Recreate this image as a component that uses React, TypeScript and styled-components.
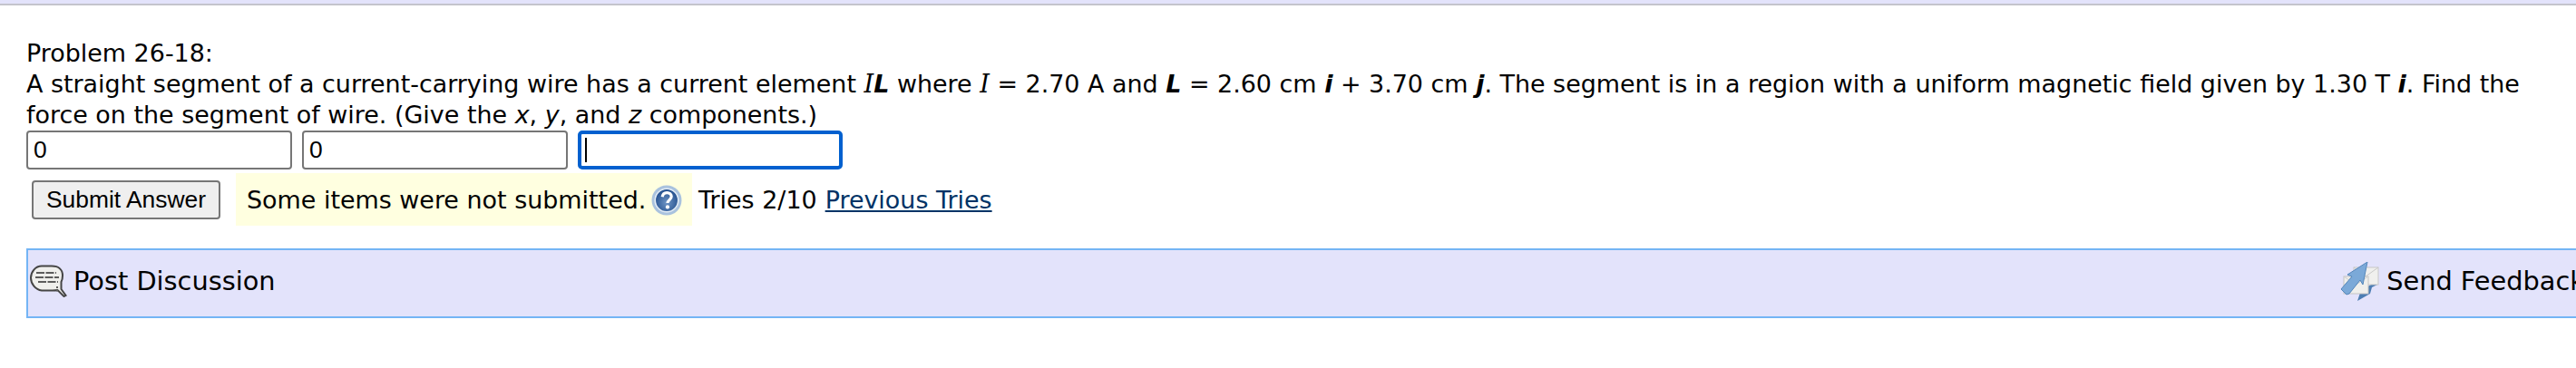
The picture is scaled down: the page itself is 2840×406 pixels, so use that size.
import React from "react";
import styled, { createGlobalStyle } from "styled-components";

const GlobalStyle = createGlobalStyle`
  html, body {
    margin: 0;
    padding: 0;
    background: #fff;
    overflow: hidden;
  }
  body {
    font-family: "DejaVu Sans", Verdana, sans-serif;
    font-size: 26.93px;
    color: #000;
  }
`;

const Page = styled.div`
  width: 2840px;
  height: 406px;
  overflow: hidden;
`;

const TopBar = styled.div`
  height: 4px;
  background: #e3e3fb;
  border-bottom: 2px solid #c4c4cc;
`;

const Problem = styled.div`
  padding: 36px 0 0 29px;
  line-height: 34px;
  width: 2770px;
`;

const Heading = styled.div``;

const Statement = styled.div``;

const MathVar = styled.i`
  font-family: "DejaVu Serif", serif;
  font-size: 27px;
`;

const Vec = styled.b`
  font-style: italic;
`;

const Inputs = styled.div`
  display: flex;
  gap: 11px;
`;

const AnswerInput = styled.input`
  box-sizing: border-box;
  width: 293px;
  height: 43px;
  margin: 0;
  padding: 0 6px;
  border: 2px solid #767676;
  border-radius: 4px;
  background: #fff;
  color: #000;
  font: 26.4px "Liberation Sans", Arial, sans-serif;
  outline: none;
`;

const FocusedBox = styled.div`
  box-sizing: border-box;
  width: 292px;
  height: 43px;
  padding: 4px 4px;
  border: 4px solid #0060cf;
  border-radius: 5px;
  background: #fff;
`;

const Caret = styled.div`
  width: 2px;
  height: 27px;
  background: #000;
`;

const SubmitRow = styled.div`
  display: flex;
  align-items: center;
  margin-top: 4px;
`;

const SubmitButton = styled.button`
  box-sizing: border-box;
  width: 208px;
  height: 43px;
  margin: 0 17px 0 6px;
  padding: 0;
  border: 2px solid #767676;
  border-radius: 4px;
  background: #efefef;
  color: #000;
  font: 26.4px "Liberation Sans", Arial, sans-serif;
  white-space: nowrap;
`;

const Notice = styled.div`
  box-sizing: border-box;
  display: flex;
  align-items: center;
  gap: 6px;
  width: 503px;
  height: 58px;
  padding: 2px 0 0 12px;
  background: #ffffe0;
`;

const Tries = styled.span`
  margin-left: 7px;
  padding-top: 2px;
  white-space: nowrap;
`;

const PrevLink = styled.a`
  margin-left: 9px;
  padding-top: 2px;
  color: #003366;
  text-decoration: underline;
  white-space: nowrap;
`;

const DiscussionBar = styled.div`
  box-sizing: border-box;
  display: flex;
  align-items: center;
  justify-content: space-between;
  width: 2823px;
  height: 77px;
  margin: 25px 0 0 29px;
  padding: 0 0 6px 2px;
  border: 2px solid #74b5f5;
  background: #e3e3fb;
  font-size: 28.8px;
`;

const BarAction = styled.div`
  display: flex;
  align-items: center;
  white-space: nowrap;
`;

const BarLabel = styled.span`
  margin-left: 7px;
`;

const FeedbackLabel = styled.span`
  margin-left: 7px;
`;

function HelpIcon() {
  return (
    <svg width="34" height="34" viewBox="0 0 32 32" style={{ flex: "none" }}>
      <defs>
        <radialGradient id="helpFill" cx="50%" cy="60%" r="60%">
          <stop offset="0%" stopColor="#6f95c4" />
          <stop offset="100%" stopColor="#1d4a8a" />
        </radialGradient>
      </defs>
      <circle cx="16" cy="16" r="15.5" fill="#a9c2de" />
      <circle cx="16" cy="16" r="12" fill="url(#helpFill)" stroke="#e4edf6" strokeWidth="1.5" />
      <path d="M11.5 12.5c.4-3 2.4-4.4 4.8-4.4 2.7 0 4.6 1.6 4.6 4 0 3.4-4 3.6-4 6.8" fill="none" stroke="#fff" strokeWidth="3" />
      <circle cx="16.9" cy="23" r="2" fill="#fff" />
    </svg>
  );
}

function ChatIcon() {
  return (
    <svg width="41" height="36" viewBox="0 0 41 36" style={{ flex: "none" }}>
      <path
        d="M13 1.5h11c8 0 12 4.5 12 10.500 0 3-.5 5-1.500 7v8l5 7-2 1-7-7c-2 .5-3.500.5-5.500.5H13C6 27.500 1 21 1 14.500S6 1.500 13 1.500z"
        fill="#efefec"
        stroke="#454545"
        strokeWidth="2"
      />
      <path d="M7 9h22M6 14h26M9 19h22" stroke="#5c5c5c" strokeWidth="2" strokeDasharray="9 1.500" fill="none" />
      <path d="M30 24v6" stroke="#5c5c5c" strokeWidth="2" strokeDasharray="2 1.500" fill="none" />
    </svg>
  );
}

function FeedbackIcon() {
  return (
    <svg width="44" height="44" viewBox="0 0 44 44" style={{ flex: "none", marginTop: 3 }}>
      <path d="M36 24l4-6 1 7-6 3-2 7-14 8 4-12z" fill="#4c7db3" />
      <rect x="15" y="6" width="27" height="19" fill="#f0f0ee" stroke="#c8c8c8" />
      <path d="M15 6l13 10L42 6" fill="none" stroke="#c9c9c9" />
      <rect x="4" y="16" width="27" height="19" fill="#efefec" stroke="#c4c4c4" />
      <path d="M4 16l13 9 14-9" fill="none" stroke="#cfcfcf" />
      <path d="M30 0L8 14l5 2L1 30l6 6 3-1L22 20l3 5z" fill="#7ba9d8" stroke="#5587bb" />
    </svg>
  );
}

export default function App() {
  return (
    <Page>
      <GlobalStyle />
      <TopBar />
      <Problem>
        <Heading>Problem 26-18:</Heading>
        <Statement>
          A straight segment of a current-carrying wire has a current element{" "}
          <MathVar>I</MathVar>
          <Vec>L</Vec> where <MathVar>I</MathVar> = 2.70 A and <Vec>L</Vec> = 2.60 cm <Vec>i</Vec> + 3.70 cm{" "}
          <Vec>j</Vec>. The segment is in a region with a uniform magnetic field given by 1.30 T <Vec>i</Vec>. Find
          the force on the segment of wire. (Give the <i>x</i>, <i>y</i>, and <i>z</i> components.)
        </Statement>
        <Inputs>
          <AnswerInput readOnly value="0" />
          <AnswerInput readOnly value="0" />
          <FocusedBox>
            <Caret />
          </FocusedBox>
        </Inputs>
        <SubmitRow>
          <SubmitButton>Submit Answer</SubmitButton>
          <Notice>
            Some items were not submitted.
            <HelpIcon />
          </Notice>
          <Tries>Tries 2/10</Tries>
          <PrevLink href="#">Previous Tries</PrevLink>
        </SubmitRow>
      </Problem>
      <DiscussionBar>
        <BarAction>
          <ChatIcon />
          <BarLabel>Post Discussion</BarLabel>
        </BarAction>
        <BarAction>
          <FeedbackIcon />
          <FeedbackLabel>Send Feedback</FeedbackLabel>
        </BarAction>
      </DiscussionBar>
    </Page>
  );
}
